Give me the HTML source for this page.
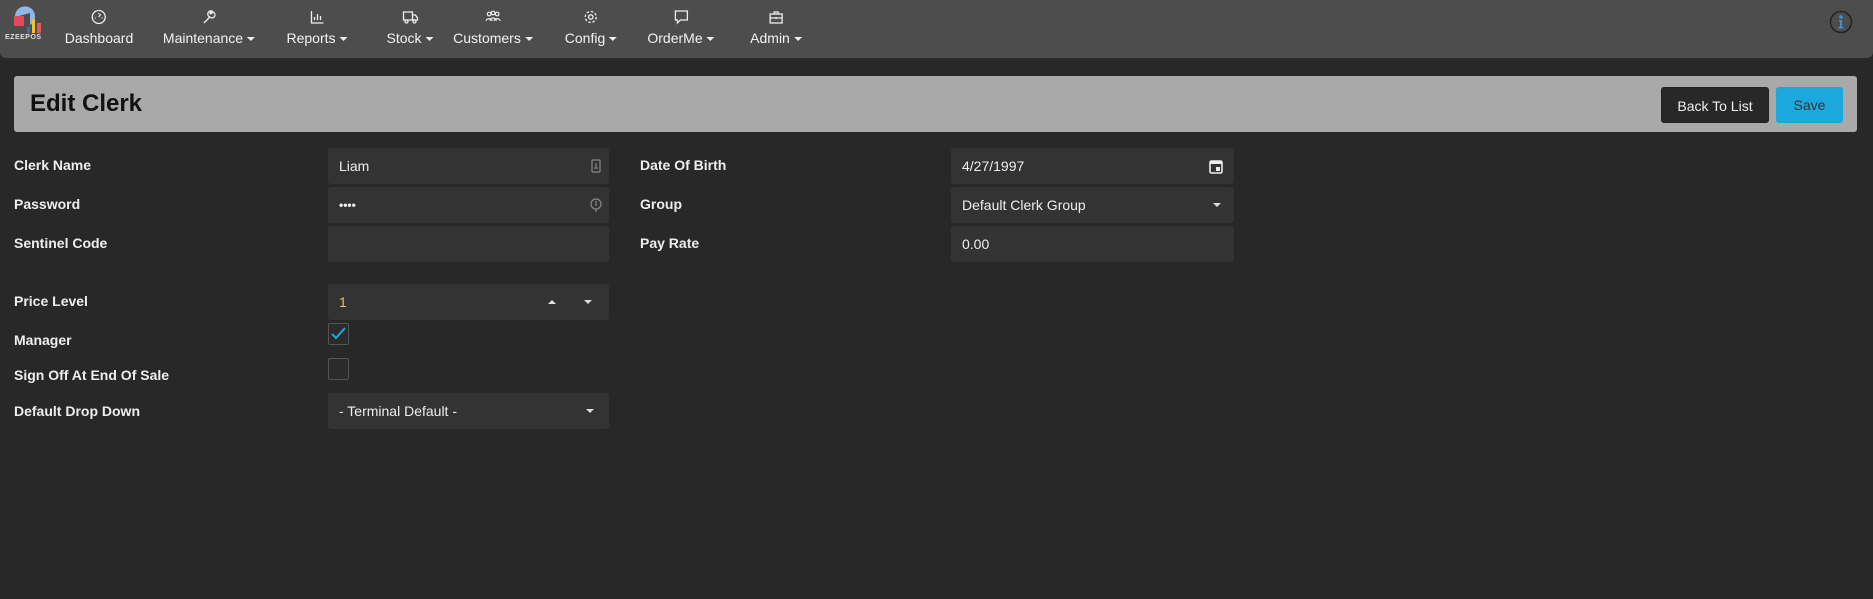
<!DOCTYPE html>
<html><head><style>
*{box-sizing:border-box;margin:0;padding:0}
body{width:1873px;height:599px;background:#282828;font-family:"Liberation Sans",sans-serif;color:#eee;position:relative;overflow:hidden}
.nav{position:absolute;left:0;top:0;width:1873px;height:58px;background:#4d4d4d;border-radius:0 0 6px 6px}
.ni{position:absolute;top:9px;transform:translateX(-50%);text-align:center;font-size:14px;color:#f2f2f2;white-space:nowrap}
.ni svg{display:block;margin:0 auto 5px;width:16px;height:16px}
.car{display:inline-block;border-left:4px solid transparent;border-right:4px solid transparent;border-top:4px solid #eee;vertical-align:middle;margin-left:4px}
.hdr{position:absolute;left:14px;top:76px;width:1843px;height:56px;background:#a9a9a9;border-radius:3px}
.hdr h1{position:absolute;left:16px;top:14px;font-size:24px;color:#111;font-weight:bold}
.btn{position:absolute;top:11px;height:36px;border-radius:3px;font-size:14px;line-height:36px;text-align:center}
.lbl{position:absolute;font-size:14px;font-weight:bold;color:#eee}
.in{position:absolute;height:36px;background:#333;border-radius:3px;font-size:14px;line-height:36px;padding-left:11px;color:#eee}
.cb{position:absolute;left:328px;width:21px;height:22px;border:1px solid #555;border-radius:2px;background:#2b2b2b}
.dd{position:absolute;border-left:4px solid transparent;border-right:4px solid transparent;border-top:4px solid #ddd}
</style></head><body>
<div class="nav">
 <svg style="position:absolute;left:6px;top:5px" width="42" height="36" viewBox="0 0 42 36">
  <path d="M9 12 A10 10 0 1 1 24 20 L24 8 Z" fill="#8fb8e8"/>
  <rect x="8" y="11" width="10" height="10" fill="#e04a5a"/>
  <rect x="26" y="14" width="3" height="14" fill="#f2c230"/>
  <rect x="31" y="18" width="4" height="10" fill="#e05a60"/>
  <rect x="21" y="22" width="3" height="6" fill="#3a6fb0"/>
 </svg>
 <div style="position:absolute;left:5px;top:34px;font-size:7px;font-weight:bold;color:#ddd;letter-spacing:0.5px">EZEEPOS</div>
 <div class="ni" style="left:99px"><svg viewBox="0 0 16 16" fill="none" stroke="#eee" stroke-width="1.3"><circle cx="8" cy="8" r="6.5"/><path d="M8 8l2-3M4 9h1M11 9h1M8 4v1"/></svg>Dashboard</div>
 <div class="ni" style="left:209px"><svg viewBox="0 0 16 16" fill="none" stroke="#eee" stroke-width="1.3"><path d="M3 14l6-6M9 8a3 3 0 1 0 3-5l-2 2-1-1 2-2a3 3 0 0 0-2 6"/></svg>Maintenance<span class="car"></span></div>
 <div class="ni" style="left:317px"><svg viewBox="0 0 16 16" fill="none" stroke="#eee" stroke-width="1.3"><path d="M2 2v12h12M5 11V8M8 11V5M11 11V7"/></svg>Reports<span class="car"></span></div>
 <div class="ni" style="left:410px"><svg viewBox="0 0 16 16" fill="none" stroke="#eee" stroke-width="1.3"><path d="M1 3h9v8H1zM10 6h3l2 3v2h-5"/><circle cx="4" cy="12.5" r="1.5"/><circle cx="12" cy="12.5" r="1.5"/></svg>Stock<span class="car"></span></div>
 <div class="ni" style="left:493px"><svg viewBox="0 0 16 16" fill="none" stroke="#eee" stroke-width="1.2"><circle cx="4" cy="5" r="1.8"/><circle cx="8" cy="4" r="1.8"/><circle cx="12" cy="5" r="1.8"/><path d="M1 12c0-3 6-3 6 0M5 12c0-4 6-4 6 0M9 12c0-3 6-3 6 0"/></svg>Customers<span class="car"></span></div>
 <div class="ni" style="left:591px"><svg viewBox="0 0 16 16" fill="none" stroke="#eee" stroke-width="1.3"><circle cx="8" cy="8" r="2.2"/><circle cx="8" cy="8" r="5.5" stroke-dasharray="2.5 1.8"/></svg>Config<span class="car"></span></div>
 <div class="ni" style="left:681px"><svg viewBox="0 0 16 16" fill="none" stroke="#eee" stroke-width="1.3"><path d="M2 2h12v9H7l-3 3v-3H2z"/></svg>OrderMe<span class="car"></span></div>
 <div class="ni" style="left:776px"><svg viewBox="0 0 16 16" fill="none" stroke="#eee" stroke-width="1.3"><rect x="2" y="5" width="12" height="9"/><path d="M6 5V3h4v2M2 9h12M8 8v2"/></svg>Admin<span class="car"></span></div>
 <svg style="position:absolute;left:1829px;top:10px" width="24" height="24" viewBox="0 0 24 24"><circle cx="12" cy="12" r="10.5" fill="none" stroke="#222" stroke-width="1.5"/><circle cx="12" cy="7" r="1.8" fill="#3a8fd8"/><path d="M10 10h3v7h1.5v1.5h-5V17H11v-5.5h-1z" fill="#3a8fd8"/></svg>
</div>
<div class="hdr"><h1>Edit Clerk</h1>
 <div class="btn" style="left:1647px;width:108px;background:#282828;border:1px solid #222;color:#eee">Back To List</div>
 <div class="btn" style="left:1762px;width:67px;background:#1ca8dd;color:#333">Save</div>
</div>

<div class="lbl" style="left:14px;top:157px">Clerk Name</div>
<div class="lbl" style="left:14px;top:196px">Password</div>
<div class="lbl" style="left:14px;top:235px">Sentinel Code</div>
<div class="lbl" style="left:14px;top:293px">Price Level</div>
<div class="lbl" style="left:14px;top:332px">Manager</div>
<div class="lbl" style="left:14px;top:367px">Sign Off At End Of Sale</div>
<div class="lbl" style="left:14px;top:403px">Default Drop Down</div>

<div class="in" style="left:328px;top:148px;width:281px">Liam<svg style="position:absolute;right:8px;top:11px" width="10" height="14" viewBox="0 0 10 14" fill="none" stroke="#888" stroke-width="1.2"><rect x="1" y="1" width="8" height="12" rx="1"/><path d="M5 4v4M3 9h4"/></svg></div>
<div class="in" style="left:328px;top:187px;width:281px;font-weight:bold;letter-spacing:0px;font-size:12px">••••<svg style="position:absolute;right:7px;top:10px" width="12" height="16" viewBox="0 0 12 16" fill="none" stroke="#888" stroke-width="1.2"><circle cx="6" cy="7" r="5"/><path d="M6 4v5M6 12v3"/></svg></div>
<div class="in" style="left:328px;top:226px;width:281px"></div>
<div class="in" style="left:328px;top:284px;width:281px;color:#e8c070">1<span class="dd" style="left:220px;top:16px;border-top:none;border-bottom:4px solid #ddd"></span><span class="dd" style="left:256px;top:16px"></span></div>
<div class="cb" style="top:323px"><svg width="19" height="20" viewBox="0 0 19 20"><path d="M3 10l4 4 9-10" fill="none" stroke="#1ca8dd" stroke-width="2"/></svg></div>
<div class="cb" style="top:358px"></div>
<div class="in" style="left:328px;top:393px;width:281px">- Terminal Default -<span class="dd" style="left:258px;top:16px"></span></div>

<div class="lbl" style="left:640px;top:157px">Date Of Birth</div>
<div class="lbl" style="left:640px;top:196px">Group</div>
<div class="lbl" style="left:640px;top:235px">Pay Rate</div>
<div class="in" style="left:951px;top:148px;width:283px">4/27/1997<svg style="position:absolute;right:11px;top:11px" width="14" height="15" viewBox="0 0 14 15"><rect x="1" y="2" width="12" height="12" rx="1.5" fill="none" stroke="#eee" stroke-width="1.6"/><rect x="1" y="2" width="12" height="3" fill="#eee"/><rect x="7" y="8" width="4" height="4" fill="#eee"/></svg></div>
<div class="in" style="left:951px;top:187px;width:283px">Default Clerk Group<span class="dd" style="left:262px;top:16px"></span></div>
<div class="in" style="left:951px;top:226px;width:283px">0.00</div>
</body></html>
